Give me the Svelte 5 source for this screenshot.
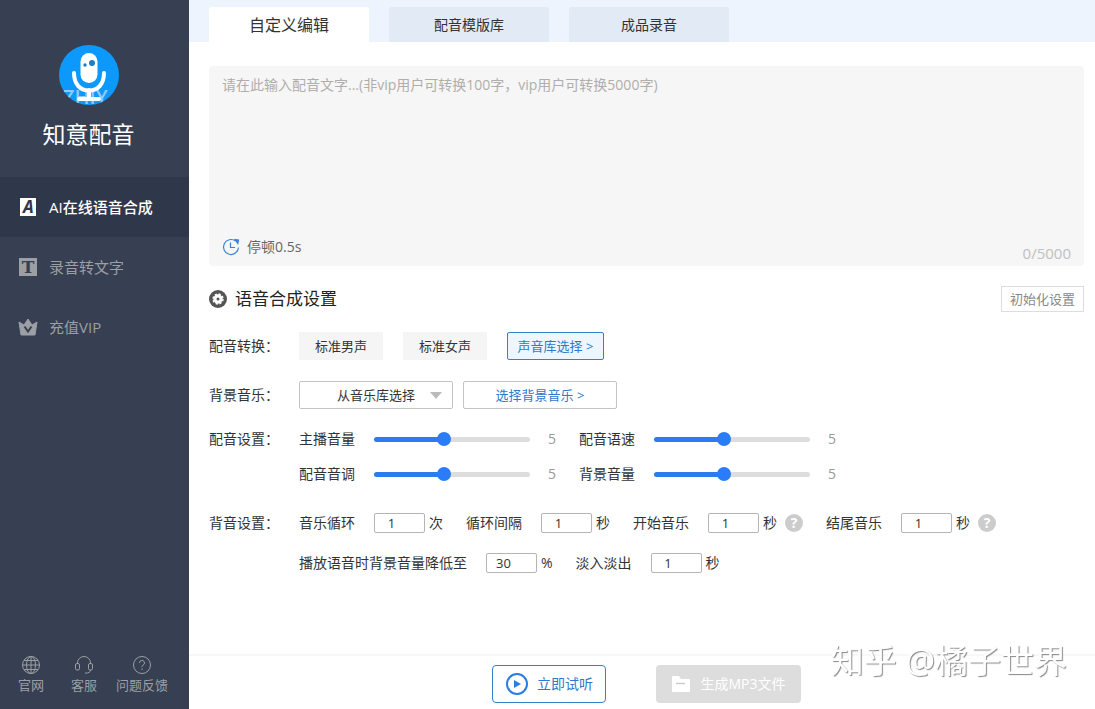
<script>
  const tabs = ['自定义编辑', '配音模版库', '成品录音'];
  let activeTab = $state(0);

  const menu = [
    { id: 'tts', name: 'AI在线语音合成' },
    { id: 'asr', name: '录音转文字' },
    { id: 'vip', name: '充值VIP' },
  ];
  let activeMenu = $state('tts');

  const maxLength = 5000;
  let text = $state('');

  let sliders = $state([
    { id: 'anchor', name: '主播音量', value: 5 },
    { id: 'speed', name: '配音语速', value: 5 },
    { id: 'pitch', name: '配音音调', value: 5 },
    { id: 'music', name: '背景音量', value: 5 },
  ]);

  let musicRows = $state([
    [
      { id: 'loop', name: '音乐循环', value: 1, unit: '次' },
      { id: 'interval', name: '循环间隔', value: 1, unit: '秒' },
      { id: 'start', name: '开始音乐', value: 1, unit: '秒', help: true },
      { id: 'end', name: '结尾音乐', value: 1, unit: '秒', help: true },
    ],
    [
      { id: 'duck', name: '播放语音时背景音量降低至', value: 30, unit: '%' },
      { id: 'fade', name: '淡入淡出', value: 1, unit: '秒' },
    ],
  ]);

  // sliders go from 1 to 10
  function fill(value) {
    return ((value - 1) / 9) * 100;
  }

  function addPause() {
    text += '[停顿0.5s]';
  }

  function reset() {
    sliders.forEach(s => (s.value = 5));
    musicRows.flat().forEach(m => (m.value = m.id === 'duck' ? 30 : 1));
  }
</script>

<div class="app">
  <aside class="sidebar">
    <div class="brand">
      <svg width="60" height="60" viewBox="0 0 60 60">
        <defs>
          <clipPath id="disc"><circle cx="30" cy="30" r="30" /></clipPath>
        </defs>
        <g clip-path="url(#disc)">
          <rect width="60" height="60" fill="#0d99fb" />
          <text x="4" y="59" font-size="20" font-weight="600" fill="#8fcbf8">ZHIY</text>
          <rect x="21.500" y="8" width="17" height="30" rx="8.500" fill="#fff" />
          <circle cx="26" cy="20" r="1.700" fill="#1b7fc8" />
          <circle cx="33" cy="18" r="3" fill="#1b7fc8" />
          <path d="M15 28c0 11 6 17.500 15 17.500S45 39 45 28" fill="none" stroke="#fff" stroke-width="4" stroke-linecap="round" />
          <path d="M30 45v9M20 54h20" fill="none" stroke="#fff" stroke-width="4" stroke-linecap="round" />
        </g>
      </svg>
      <h1>知意配音</h1>
    </div>

    <nav class="menu">
      {#each menu as item}
        <a href="#{item.id}" class:active={activeMenu === item.id} onclick={() => (activeMenu = item.id)}>
          <svg width="20" height="20" viewBox="0 0 20 20">
            {#if item.id === 'tts'}
              <rect x="2" y="1" width="16" height="18" fill="#fff" />
              <text x="5" y="16" font-size="17" font-weight="700" font-style="italic" fill="#2f384b">A</text>
            {:else if item.id === 'asr'}
              <rect x="1" y="1" width="18" height="18" fill="#9c9fa3" />
              <text class="slab" x="10" y="16" font-size="17" font-weight="700" text-anchor="middle" fill="#364052">T</text>
            {:else}
              <path d="M1 5l5 3 4-6 4 6 5-3-2 13H3z" fill="#9c9fa3" stroke="#9c9fa3" stroke-linejoin="round" />
              <path d="M6.500 9.500l3.500 5 3.500-5" fill="none" stroke="#364052" stroke-width="2" />
            {/if}
          </svg>
          {item.name}
        </a>
      {/each}
    </nav>

    <div class="links">
      <a href="#site">
        <svg width="20" height="20" viewBox="0 0 20 20">
          <circle cx="10" cy="10" r="8.500" />
          <ellipse cx="10" cy="10" rx="4.500" ry="8.500" />
          <path d="M10 1.500v17M1.500 10h17M3 5.500h14M3 14.500h14" />
        </svg>
        官网
      </a>
      <a href="#service">
        <svg width="20" height="20" viewBox="0 0 20 20">
          <path d="M3.500 9V8a6.500 6.500 0 0 1 13 0v1" />
          <rect x="1.500" y="8.500" width="4" height="6.500" rx="1.500" />
          <rect x="14.500" y="8.500" width="4" height="6.500" rx="1.500" />
          <path d="M16.500 15c0 2-2 3.200-5.500 3.200" />
        </svg>
        客服
      </a>
      <a href="#feedback">
        <svg width="20" height="20" viewBox="0 0 20 20">
          <circle cx="10" cy="10" r="8.500" />
          <path d="M7.500 8a2.500 2.500 0 1 1 3.500 2.200c-.8.400-1 .8-1 2M10 13.500v1.500" />
        </svg>
        问题反馈
      </a>
    </div>
  </aside>

  <main>
    <div class="tabs">
      {#each tabs as tab, i}
        <button class:active={activeTab === i} onclick={() => (activeTab = i)}>{tab}</button>
      {/each}
    </div>

    <section class="editor">
      <textarea
        aria-label="配音文字"
        placeholder="请在此输入配音文字...(非vip用户可转换100字，vip用户可转换5000字)"
        maxlength={maxLength}
        bind:value={text}
      ></textarea>
      <div class="editor-bar">
        <button class="pause" onclick={addPause}>
          <svg width="18" height="18" viewBox="0 0 18 18" fill="none" stroke="#3b82d6" stroke-width="1.200">
            <path d="M13.500 3A7.500 7.500 0 1 0 16.500 9.500" />
            <path d="M8.500 4.500v5h4.500" />
            <path d="M13 1.500l3.500.5-.7 3.500z" fill="#3b82d6" />
          </svg>
          停顿0.5s
        </button>
        <span class="count">{text.length}/{maxLength}</span>
      </div>
    </section>

    <section class="settings">
      <header>
        <svg width="18" height="18" viewBox="0 0 18 18">
          <circle cx="9" cy="9" r="9" fill="#555" />
          <circle cx="9" cy="9" r="4.700" fill="#fff" />
          <circle cx="9" cy="9" r="5" fill="none" stroke="#fff" stroke-width="1.400" stroke-dasharray="2.200 1.727" />
          <circle cx="9" cy="9" r="1.500" fill="#555" />
        </svg>
        <h2>语音合成设置</h2>
        <button class="reset" onclick={reset}>初始化设置</button>
      </header>

      <div class="row voice">
        <span class="title">配音转换：</span>
        <div class="options">
          <button class="option">标准男声</button>
          <button class="option">标准女声</button>
          <button class="option chosen">声音库选择 &gt;</button>
        </div>
      </div>

      <div class="row music">
        <label class="title" for="music-source">背景音乐：</label>
        <div class="pickers">
          <div class="select">
            <select id="music-source">
              <option>从音乐库选择</option>
              <option>本地上传</option>
            </select>
          </div>
          <button class="pick">选择背景音乐 &gt;</button>
        </div>
      </div>

      <div class="row levels">
        <span class="title">配音设置：</span>
        <div class="sliders">
          {#each sliders as slider}
            <div class="slider">
              <label for={slider.id}>{slider.name}</label>
              <input
                id={slider.id}
                type="range"
                min="1"
                max="10"
                style="--fill: {fill(slider.value)}%"
                bind:value={slider.value}
              />
              <output for={slider.id}>{slider.value}</output>
            </div>
          {/each}
        </div>
      </div>

      <div class="row">
        <span class="title">背音设置：</span>
        <div class="fields">
          {#each musicRows as fields}
            <div class="line">
              {#each fields as field}
                <div class="field">
                  <label for={field.id}>{field.name}</label>
                  <input id={field.id} type="text" inputmode="numeric" bind:value={field.value} />
                  <span>{field.unit}</span>
                  {#if field.help}
                    <button class="help" aria-label="帮助">?</button>
                  {/if}
                </div>
              {/each}
            </div>
          {/each}
        </div>
      </div>
    </section>

    <footer>
      <button class="listen">
        <svg width="24" height="24" viewBox="0 0 24 24">
          <circle cx="12" cy="12" r="10" fill="none" stroke="#2b7de0" stroke-width="2" />
          <path d="M9 8l7 4-7 4z" fill="#2b7de0" />
        </svg>
        立即试听
      </button>
      <button class="export" disabled>
        <svg width="20" height="18" viewBox="0 0 20 18">
          <path d="M1 2a1 1 0 0 1 1-1h6l2 3h8a1 1 0 0 1 1 1v11a1 1 0 0 1-1 1H2a1 1 0 0 1-1-1z" fill="#fff" />
          <path d="M5 8.500h9" stroke="#ccc" stroke-width="1.500" />
        </svg>
        生成MP3文件
      </button>
    </footer>
  </main>

  <div class="watermark">知乎 @橘子世界</div>
</div>

<style>
  :global(body) {
    margin: 0;
  }

  .app {
    display: flex;
    min-height: 100vh;
    background: #fff;
    color: #333;
    font-family: 'Open Sans', 'Noto Sans CJK SC', sans-serif;
    font-size: 14px;
    line-height: 20px;
  }

  .app * {
    box-sizing: border-box;
  }

  button,
  input,
  select,
  textarea {
    margin: 0;
    padding: 0;
    border: 0;
    background: none;
    color: inherit;
    font: inherit;
  }

  button {
    cursor: pointer;
  }

  svg {
    flex: none;
  }

  a {
    color: inherit;
    text-decoration: none;
  }

  /* sidebar */
  .sidebar {
    display: flex;
    flex-direction: column;
    flex: none;
    width: 189px;
    background: #364052;
    color: #9c9fa3;
  }

  .brand {
    display: flex;
    flex-direction: column;
    align-items: center;
    height: 177px;
    padding: 45px 12px 0 0;
  }

  h1 {
    margin: 13px 0 0;
    color: #fff;
    font-size: 23px;
    font-weight: 400;
    line-height: 32px;
  }

  .menu a {
    display: flex;
    align-items: center;
    gap: 11px;
    height: 60px;
    padding-left: 18px;
    font-size: 15px;
  }

  .menu a.active {
    background: #2f384b;
    color: #fff;
    font-weight: 500;
  }

  .slab {
    font-family: 'DejaVu Serif', serif;
  }

  .links {
    display: flex;
    gap: 27px;
    margin-top: auto;
    padding: 0 0 14px 18px;
    font-size: 13px;
  }

  .links a {
    display: flex;
    flex-direction: column;
    align-items: center;
  }

  .links a:last-child {
    margin-left: -8px;
  }

  .links svg {
    fill: none;
    stroke: #9c9fa3;
  }

  /* main column */
  main {
    display: flex;
    flex-direction: column;
    flex: 1;
    min-width: 0;
  }

  .tabs {
    display: flex;
    gap: 20px;
    height: 42px;
    padding: 7px 20px 0;
    background: #edf4fd;
  }

  .tabs button {
    width: 160px;
    border-radius: 3px 3px 0 0;
    background: #e2eaf6;
  }

  .tabs button.active {
    background: #fff;
    font-size: 16px;
  }

  .editor {
    display: flex;
    flex-direction: column;
    height: 200px;
    margin: 24px 11px 0 20px;
    padding: 9px 13px 3px;
    border-radius: 4px;
    background: #f6f6f6;
  }

  textarea {
    flex: 1;
    width: 100%;
    outline: none;
    resize: none;
  }

  textarea::placeholder {
    color: #b0adab;
    opacity: 1;
  }

  .editor-bar {
    display: flex;
    justify-content: space-between;
  }

  .pause {
    display: flex;
    align-items: center;
    gap: 7px;
    height: 20px;
    color: #666;
  }

  .count {
    padding-top: 6px;
    color: #c0c0c0;
    font-size: 15px;
  }

  /* settings */
  .settings {
    padding: 20px 11px 0 20px;
  }

  header {
    display: flex;
    align-items: center;
    gap: 8px;
    height: 26px;
    margin-bottom: 20px;
  }

  h2 {
    margin: 0;
    color: #222;
    font-size: 17px;
    font-weight: 400;
  }

  .reset {
    height: 26px;
    margin-left: auto;
    padding: 0 8px;
    border: 1px solid #ddd;
    color: #888;
    font-size: 13px;
  }

  .row {
    display: flex;
  }

  .title {
    flex: none;
    width: 90px;
  }

  .voice,
  .music {
    align-items: center;
    margin-bottom: 21px;
    font-size: 13px;
  }

  .music {
    margin-bottom: 20px;
  }

  .voice .title,
  .music .title {
    font-size: 14px;
  }

  .options {
    display: flex;
    gap: 20px;
  }

  .option {
    width: 84px;
    height: 28px;
    background: #f5f5f5;
  }

  .chosen {
    width: 97px;
    border: 1px solid #3a7fc9;
    border-radius: 2px;
    background: #edf5fd;
    color: #2f78cc;
  }

  .pickers {
    display: flex;
    gap: 10px;
  }

  .select {
    position: relative;
  }

  .select::after {
    content: '';
    position: absolute;
    top: 11px;
    right: 11px;
    border: 6px solid transparent;
    border-top: 7px solid #bbb;
    border-bottom: 0;
    pointer-events: none;
  }

  select,
  .pick {
    width: 154px;
    height: 28px;
    border: 1px solid #c4c4c4;
    border-radius: 2px;
  }

  select {
    appearance: none;
    padding-left: 37px;
  }

  .pick {
    color: #2f78cc;
  }

  .levels {
    margin-bottom: 29px;
  }

  .sliders {
    display: grid;
    grid-template-columns: 280px 280px;
    row-gap: 15px;
  }

  .slider {
    display: flex;
    align-items: center;
    height: 20px;
  }

  .slider label {
    width: 75px;
  }

  .slider output {
    margin-left: 18px;
    color: #999;
  }

  input[type='range'] {
    appearance: none;
    width: 156px;
    height: 14px;
  }

  input[type='range']::-webkit-slider-runnable-track {
    height: 5px;
    border-radius: 3px;
    background: linear-gradient(to right, #2b7cf0 var(--fill), #ddd var(--fill));
  }

  input[type='range']::-webkit-slider-thumb {
    appearance: none;
    width: 14px;
    height: 14px;
    margin-top: -5px;
    border-radius: 50%;
    background: #2b7cf9;
  }

  .line {
    display: flex;
    flex-wrap: wrap;
    gap: 20px 23px;
    margin-bottom: 20px;
  }

  .field {
    display: flex;
    align-items: center;
    height: 20px;
  }

  .field input {
    width: 51px;
    height: 20px;
    margin: 0 4px 0 19px;
    padding-right: 16px;
    border: 1px solid #b5b5b5;
    border-radius: 2px;
    font-size: 13px;
    text-align: center;
  }

  .help {
    width: 18px;
    height: 18px;
    margin-left: 8px;
    border-radius: 50%;
    background: #ccc;
    color: #fff;
    font-weight: 700;
    line-height: 18px;
  }

  /* bottom bar */
  footer {
    display: flex;
    justify-content: center;
    gap: 50px;
    margin-top: auto;
    padding: 9px 11px 6px 20px;
    border-top: 2px solid #f7f7f7;
  }

  footer button {
    display: flex;
    align-items: center;
    justify-content: center;
    height: 38px;
    border-radius: 4px;
  }

  .listen {
    gap: 8px;
    width: 114px;
    border: 1px solid #3a7fc9;
    color: #2f78cc;
  }

  .export {
    gap: 9px;
    width: 145px;
    background: #ddd;
    color: #fff;
    cursor: default;
  }

  .watermark {
    position: fixed;
    right: 28px;
    bottom: 26px;
    color: #fff;
    font-size: 33px;
    line-height: 44px;
    text-shadow: 1px 1px 1px #888;
    pointer-events: none;
  }
</style>
